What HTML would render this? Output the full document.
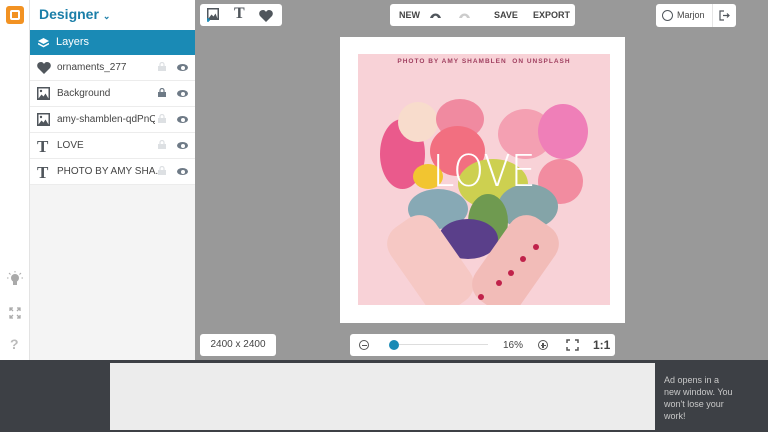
<!DOCTYPE html>
<html><head><style>
*{margin:0;padding:0;box-sizing:border-box}
body{width:768px;height:432px;overflow:hidden;background:#999;font-family:"Liberation Sans",sans-serif;position:relative}
.abs{position:absolute}
.strip{left:0;top:0;width:30px;height:360px;background:#fff;border-right:1px solid #e3e3e3}
.panel{left:30px;top:0;width:165px;height:360px;background:#f4f4f4}
.hdr{left:30px;top:0;width:165px;height:30px;background:#fff}
.layers{left:30px;top:30px;width:165px;height:25px;background:#1a8ab5;color:#fff;font-size:11px;line-height:25px;padding-left:26px}
.row{left:30px;width:165px;height:26px;background:#fff;border-bottom:1px solid #ececec;font-size:10px;color:#444;line-height:25px;padding-left:27px;white-space:nowrap}
.lock{position:absolute;left:128px;top:7px;width:8px;height:9px}
.eye{position:absolute;left:147px;top:9px;width:11px;height:7px;border-radius:50%;background:#6e7a86}
.eye::after{content:"";position:absolute;left:3.5px;top:1.5px;width:4px;height:4px;border-radius:50%;background:#fff}
.box{background:#fff;border-radius:3px}
.tb{font-size:9px;font-weight:bold;color:#444}
.b{position:absolute;border-radius:50%}
</style></head><body>
<div class="abs strip"></div>
<div class="abs panel"></div>
<div class="abs hdr"></div>
<div class="abs" style="left:6px;top:6px;width:18px;height:18px;background:#f29222;border-radius:3px"><div style="position:absolute;left:4px;top:4px;width:10px;height:10px;border:2px solid #fff;border-radius:2px"></div></div>
<div class="abs" style="left:39px;top:6px;font-size:14px;font-weight:bold;color:#1a7ea8">Designer <span style="font-size:9px">⌄</span></div>
<div class="abs layers"><svg style="position:absolute;left:8px;top:8px" width="11" height="10" viewBox="0 0 11 10"><path d="M5.5 0L11 3 5.5 6 0 3z" fill="#fff"/><path d="M0 5.5l5.5 3 5.5-3" stroke="#fff" stroke-width="1.5" fill="none"/></svg>Layers</div>

<div class="abs row" style="top:55px"><svg style="position:absolute;left:7px;top:7px" width="14" height="12" viewBox="0 0 14 12"><path d="M7 12L1 6C-1 3 1 0 4 0c1.5 0 2.5 1 3 2 .5-1 1.5-2 3-2 3 0 5 3 3 6z" fill="#50565c"/></svg>ornaments_277<svg class="lock" viewBox="0 0 8 9"><rect y="4" width="8" height="5" fill="#dde0e3"/><path d="M2 4V2.5a2 2 0 014 0V4" stroke="#dde0e3" fill="none" stroke-width="1.2"/></svg><div class="eye"></div></div>
<div class="abs row" style="top:81px"><svg style="position:absolute;left:7px;top:6px" width="13" height="13" viewBox="0 0 13 13"><rect width="13" height="13" fill="#50565c"/><rect x="1.5" y="1.5" width="10" height="10" fill="#fff"/><path d="M1.5 11.5l3-4 2 2 2-3 3 5z" fill="#50565c"/><circle cx="4" cy="4" r="1.2" fill="#50565c"/></svg>Background<svg class="lock" viewBox="0 0 8 9"><rect y="4" width="8" height="5" fill="#6e7a86"/><path d="M2 4V2.5a2 2 0 014 0V4" stroke="#6e7a86" fill="none" stroke-width="1.2"/></svg><div class="eye"></div></div>
<div class="abs row" style="top:107px"><svg style="position:absolute;left:7px;top:6px" width="13" height="13" viewBox="0 0 13 13"><rect width="13" height="13" fill="#50565c"/><rect x="1.5" y="1.5" width="10" height="10" fill="#fff"/><path d="M1.5 11.5l3-4 2 2 2-3 3 5z" fill="#50565c"/><circle cx="4" cy="4" r="1.2" fill="#50565c"/></svg><span style="display:inline-block;width:98px;overflow:hidden;vertical-align:top">amy-shamblen-qdPnQ...</span><svg class="lock" viewBox="0 0 8 9"><rect y="4" width="8" height="5" fill="#dde0e3"/><path d="M2 4V2.5a2 2 0 014 0V4" stroke="#dde0e3" fill="none" stroke-width="1.2"/></svg><div class="eye"></div></div>
<div class="abs row" style="top:133px"><span style="position:absolute;left:7px;top:1px;font-family:'Liberation Serif',serif;font-size:17px;font-weight:bold;color:#50565c">T</span>LOVE<svg class="lock" viewBox="0 0 8 9"><rect y="4" width="8" height="5" fill="#dde0e3"/><path d="M2 4V2.5a2 2 0 014 0V4" stroke="#dde0e3" fill="none" stroke-width="1.2"/></svg><div class="eye"></div></div>
<div class="abs row" style="top:159px"><span style="position:absolute;left:7px;top:1px;font-family:'Liberation Serif',serif;font-size:17px;font-weight:bold;color:#50565c">T</span>PHOTO BY AMY SHA...<svg class="lock" viewBox="0 0 8 9"><rect y="4" width="8" height="5" fill="#dde0e3"/><path d="M2 4V2.5a2 2 0 014 0V4" stroke="#dde0e3" fill="none" stroke-width="1.2"/></svg><div class="eye"></div></div>

<svg class="abs" style="left:7px;top:271px" width="16" height="17" viewBox="0 0 16 17"><circle cx="8" cy="7" r="4" fill="#aaa"/><rect x="6" y="10" width="4" height="4" fill="#aaa"/><path d="M8 0v1.5M2 2l1.5 1.5M14 2l-1.5 1.5M0 7h1.5M16 7h-1.5" stroke="#aaa"/></svg>
<svg class="abs" style="left:9px;top:307px" width="12" height="12" viewBox="0 0 12 12" stroke="#aaa" stroke-width="1.3" fill="none"><path d="M1 1l3 3M11 1L8 4M1 11l3-3M11 11L8 8M1 4V1h3M11 4V1H8M1 8v3h3M11 8v3H8"/></svg>
<div class="abs" style="left:10px;top:336px;font-size:14px;color:#bbb;font-weight:bold">?</div>

<div class="abs box" style="left:200px;top:4px;width:82px;height:22px">
<svg style="position:absolute;left:7px;top:4px" width="14" height="14" viewBox="0 0 14 14"><rect width="12" height="12" fill="#50565c"/><rect x="1.5" y="1.5" width="9" height="9" fill="#fff"/><path d="M1.5 10.5l3-4 2 2 2-3 2 5z" fill="#50565c"/><path d="M1 10v4M-1 12h4" stroke="#1a8ab5" stroke-width="1.5"/></svg>
<span style="position:absolute;left:34px;top:1px;font-family:'Liberation Serif',serif;font-size:16px;font-weight:bold;color:#50565c">T</span>
<svg style="position:absolute;left:59px;top:6px" width="14" height="12" viewBox="0 0 14 12"><path d="M7 12L1 6C-1 3 1 0 4 0c1.5 0 2.5 1 3 2 .5-1 1.5-2 3-2 3 0 5 3 3 6z" fill="#50565c"/></svg>
</div>
<div class="abs box" style="left:390px;top:4px;width:185px;height:22px">
<span class="abs tb" style="left:9px;top:6px">NEW</span>
<svg class="abs" style="left:39px;top:7px" width="13" height="8" viewBox="0 0 13 8"><path d="M1 7C3 1 10 1 12 7L9 7C8 4 5 4 4 7z" fill="#50565c"/></svg>
<svg class="abs" style="left:68px;top:7px" width="13" height="8" viewBox="0 0 13 8"><path d="M1 7C3 1 10 1 12 7L9 7C8 4 5 4 4 7z" fill="#ccc"/></svg>
<span class="abs tb" style="left:104px;top:6px">SAVE</span>
<span class="abs tb" style="left:143px;top:6px">EXPORT</span>
</div>
<div class="abs box" style="left:656px;top:4px;width:80px;height:23px">
<span class="abs" style="left:6px;top:6px;width:11px;height:11px;border:1.5px solid #50565c;border-radius:50%"></span>
<span class="abs" style="left:21px;top:6px;font-size:9px;color:#444">Marjon</span>
<span class="abs" style="left:56px;top:0;width:1px;height:23px;background:#e5e5e5"></span>
<svg class="abs" style="left:63px;top:6px" width="11" height="11" viewBox="0 0 11 11" stroke="#50565c" fill="none" stroke-width="1.2"><path d="M5 1H1v9h4M4 5.5h6M8 3.5l2 2-2 2"/></svg>
</div>

<div class="abs" style="left:340px;top:37px;width:285px;height:286px;background:#fff"></div>
<div class="abs" style="left:358px;top:54px;width:252px;height:251px;background:#f8d2d7;overflow:hidden">
<div class="abs" style="left:0;top:4px;width:252px;text-align:center;font-size:6.5px;font-weight:bold;letter-spacing:1px;color:#a04060">PHOTO BY AMY SHAMBLEN&nbsp; ON UNSPLASH</div>
<div class="b" style="left:22px;top:65px;width:45px;height:70px;background:#ea5a8c"></div>
<div class="b" style="left:40px;top:48px;width:40px;height:40px;background:#f8dccc"></div>
<div class="b" style="left:78px;top:45px;width:48px;height:40px;background:#f08aa0"></div>
<div class="b" style="left:72px;top:72px;width:55px;height:50px;background:#f26f80"></div>
<div class="b" style="left:140px;top:55px;width:55px;height:50px;background:#f4a0b2"></div>
<div class="b" style="left:180px;top:50px;width:50px;height:55px;background:#ef7fb8"></div>
<div class="b" style="left:180px;top:105px;width:45px;height:45px;background:#f28ca0"></div>
<div class="b" style="left:55px;top:110px;width:30px;height:25px;background:#f2c530"></div>
<div class="b" style="left:100px;top:105px;width:70px;height:50px;background:#cdd050"></div>
<div class="b" style="left:50px;top:135px;width:60px;height:40px;background:#87a9b5"></div>
<div class="b" style="left:140px;top:130px;width:60px;height:45px;background:#84a4a8"></div>
<div class="b" style="left:110px;top:140px;width:40px;height:55px;background:#6f9a50"></div>
<div class="b" style="left:80px;top:165px;width:60px;height:40px;background:#5a3f8a"></div>
<div class="abs" style="left:45px;top:160px;width:55px;height:100px;background:#f6c8c4;transform:rotate(-35deg);border-radius:20px"></div>
<div class="abs" style="left:130px;top:160px;width:55px;height:100px;background:#f2bcb8;transform:rotate(35deg);border-radius:20px"></div>
<div class="b" style="left:175px;top:190px;width:6px;height:6px;background:#c0224a"></div>
<div class="b" style="left:162px;top:202px;width:6px;height:6px;background:#c0224a"></div>
<div class="b" style="left:150px;top:216px;width:6px;height:6px;background:#c0224a"></div>
<div class="b" style="left:138px;top:226px;width:6px;height:6px;background:#c0224a"></div>
<div class="b" style="left:120px;top:240px;width:6px;height:6px;background:#c0224a"></div>
<div class="abs" style="left:0;top:92px;width:252px;text-align:center;font-size:44px;color:#fff;font-family:'DejaVu Sans',sans-serif;font-weight:300;transform:scaleX(0.9)">LOVE</div>
</div>

<div class="abs box" style="left:200px;top:334px;width:76px;height:22px;font-size:10px;color:#444;text-align:center;line-height:22px">2400 x 2400</div>
<div class="abs box" style="left:350px;top:334px;width:265px;height:22px">
<span class="abs" style="left:9px;top:6px;width:10px;height:10px;border:1.3px solid #555;border-radius:50%"></span><span class="abs" style="left:11.5px;top:10.5px;width:5px;height:1.3px;background:#555"></span>
<span class="abs" style="left:45px;top:10px;width:93px;height:1px;background:#ddd"></span>
<span class="abs" style="left:39px;top:6px;width:10px;height:10px;border-radius:50%;background:#1a8ab5"></span>
<span class="abs" style="left:153px;top:6px;font-size:10px;color:#444">16%</span>
<span class="abs" style="left:188px;top:6px;width:10px;height:10px;border:1.3px solid #555;border-radius:50%"></span><span class="abs" style="left:190.5px;top:10.5px;width:5px;height:1.3px;background:#555"></span><span class="abs" style="left:192.4px;top:8.5px;width:1.3px;height:5px;background:#555"></span>
<svg class="abs" style="left:216px;top:5px" width="13" height="12" viewBox="0 0 13 12" stroke="#555" stroke-width="1.5" fill="none"><path d="M1 4V1h3M9 1h3v3M12 8v3H9M4 11H1V8"/></svg>
<span class="abs" style="left:243px;top:4px;font-size:12px;font-weight:bold;color:#444">1:1</span>
</div>

<div class="abs" style="left:0;top:360px;width:768px;height:72px;background:#3d4045"></div>
<div class="abs" style="left:110px;top:363px;width:545px;height:67px;background:#ececec"></div>
<div class="abs" style="left:664px;top:374px;width:70px;font-size:9px;line-height:12px;color:#c8c8c8">Ad opens in a new window. You won't lose your work!</div>
</body></html>
